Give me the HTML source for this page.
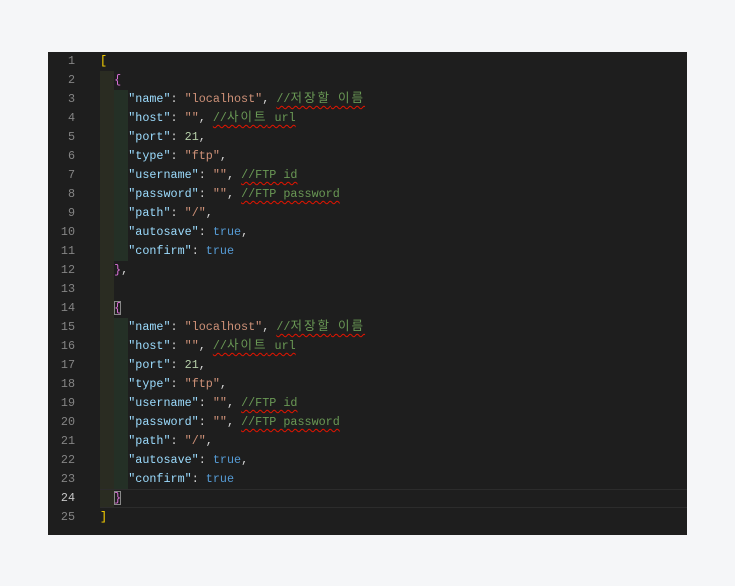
<!DOCTYPE html>
<html><head><meta charset="utf-8"><style>
body{margin:0;width:735px;height:586px;background:#f5f6f8;overflow:hidden}
#ed{position:absolute;left:48px;top:52px;width:639px;height:483px;background:#1e1e1e;font-family:"Liberation Mono","Noto Sans CJK KR",monospace;font-size:11.75px}
.l{position:absolute;left:0;width:639px;height:19px;line-height:19px;white-space:pre}
.n{position:absolute;left:0;width:27px;text-align:right;color:#858585}
.t{position:absolute;left:52px;color:#d4d4d4;line-height:19px}
.k{color:#9cdcfe}.s{color:#ce9178}.d{color:#b5cea8}.b{color:#569cd6}
.c{color:#6a9955;text-decoration:underline wavy #e51400;text-decoration-thickness:1px;text-underline-offset:3px}
.kr{font-family:"Noto Sans CJK KR",sans-serif;font-size:12.5px;letter-spacing:2px;line-height:0}
.y{color:#ffd700}.p{color:#da70d6}
.g1{position:absolute;left:52px;width:14px;background:#2a2c22}
.g2{position:absolute;left:66px;width:14px;background:#243026}
.box{outline:1px solid #888;outline-offset:-1px}
</style></head><body>
<div id="ed">
<div class="g1" style="top:19px;height:437px"></div>
<div class="g2" style="top:38px;height:171px"></div>
<div class="g2" style="top:266px;height:171px"></div>
<div style="position:absolute;left:52px;top:437px;width:587px;height:17px;border-top:1px solid #2c2c2c;border-bottom:1px solid #2c2c2c"></div>
<div class="l" style="top:0"><span class="n">1</span><span class="t"><span class="y">[</span></span></div>
<div class="l" style="top:19px"><span class="n">2</span><span class="t">  <span class="p">{</span></span></div>
<div class="l" style="top:38px"><span class="n">3</span><span class="t">    <span class="k">"name"</span>: <span class="s">"localhost"</span>, <span class="c">//<span class="kr">저장할</span> <span class="kr">이름</span></span></span></div>
<div class="l" style="top:57px"><span class="n">4</span><span class="t">    <span class="k">"host"</span>: <span class="s">""</span>, <span class="c">//<span class="kr">사이트</span> url</span></span></div>
<div class="l" style="top:76px"><span class="n">5</span><span class="t">    <span class="k">"port"</span>: <span class="d">21</span>,</span></div>
<div class="l" style="top:95px"><span class="n">6</span><span class="t">    <span class="k">"type"</span>: <span class="s">"ftp"</span>,</span></div>
<div class="l" style="top:114px"><span class="n">7</span><span class="t">    <span class="k">"username"</span>: <span class="s">""</span>, <span class="c">//FTP id</span></span></div>
<div class="l" style="top:133px"><span class="n">8</span><span class="t">    <span class="k">"password"</span>: <span class="s">""</span>, <span class="c">//FTP password</span></span></div>
<div class="l" style="top:152px"><span class="n">9</span><span class="t">    <span class="k">"path"</span>: <span class="s">"/"</span>,</span></div>
<div class="l" style="top:171px"><span class="n">10</span><span class="t">    <span class="k">"autosave"</span>: <span class="b">true</span>,</span></div>
<div class="l" style="top:190px"><span class="n">11</span><span class="t">    <span class="k">"confirm"</span>: <span class="b">true</span></span></div>
<div class="l" style="top:209px"><span class="n">12</span><span class="t">  <span class="p">}</span>,</span></div>
<div class="l" style="top:228px"><span class="n">13</span></div>
<div class="l" style="top:247px"><span class="n">14</span><span class="t">  <span class="p box">{</span></span></div>
<div class="l" style="top:266px"><span class="n">15</span><span class="t">    <span class="k">"name"</span>: <span class="s">"localhost"</span>, <span class="c">//<span class="kr">저장할</span> <span class="kr">이름</span></span></span></div>
<div class="l" style="top:285px"><span class="n">16</span><span class="t">    <span class="k">"host"</span>: <span class="s">""</span>, <span class="c">//<span class="kr">사이트</span> url</span></span></div>
<div class="l" style="top:304px"><span class="n">17</span><span class="t">    <span class="k">"port"</span>: <span class="d">21</span>,</span></div>
<div class="l" style="top:323px"><span class="n">18</span><span class="t">    <span class="k">"type"</span>: <span class="s">"ftp"</span>,</span></div>
<div class="l" style="top:342px"><span class="n">19</span><span class="t">    <span class="k">"username"</span>: <span class="s">""</span>, <span class="c">//FTP id</span></span></div>
<div class="l" style="top:361px"><span class="n">20</span><span class="t">    <span class="k">"password"</span>: <span class="s">""</span>, <span class="c">//FTP password</span></span></div>
<div class="l" style="top:380px"><span class="n">21</span><span class="t">    <span class="k">"path"</span>: <span class="s">"/"</span>,</span></div>
<div class="l" style="top:399px"><span class="n">22</span><span class="t">    <span class="k">"autosave"</span>: <span class="b">true</span>,</span></div>
<div class="l" style="top:418px"><span class="n">23</span><span class="t">    <span class="k">"confirm"</span>: <span class="b">true</span></span></div>
<div class="l" style="top:437px"><span class="n" style="color:#c6c6c6">24</span><span class="t">  <span class="p box">}</span></span></div>
<div class="l" style="top:456px"><span class="n">25</span><span class="t"><span class="y">]</span></span></div>
</div>
</body></html>
